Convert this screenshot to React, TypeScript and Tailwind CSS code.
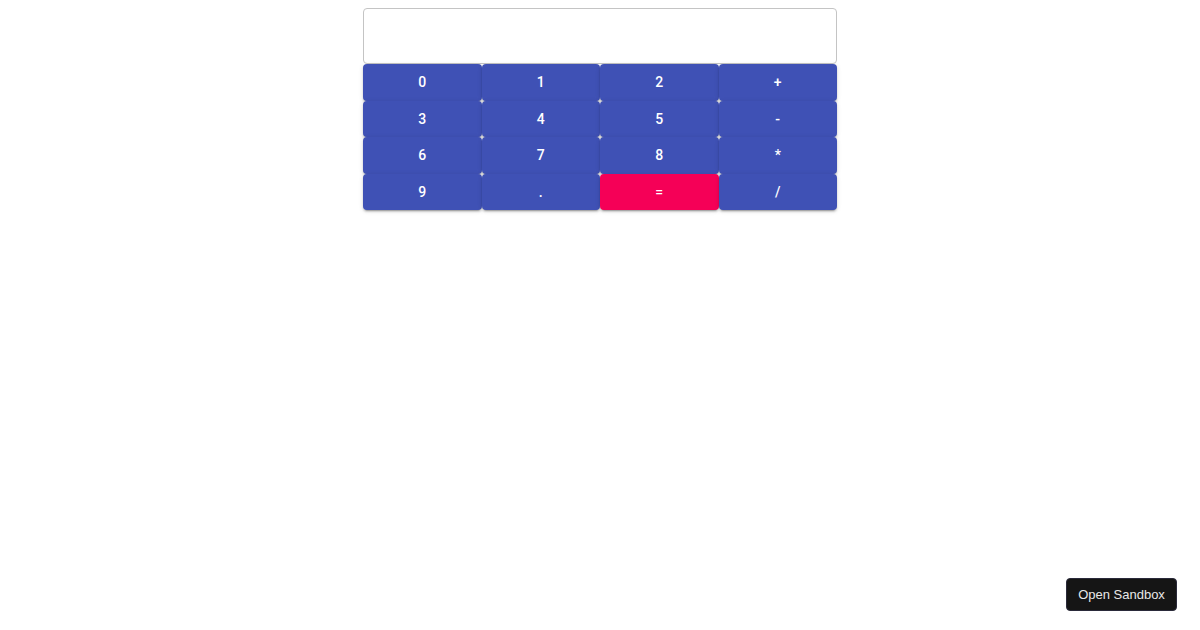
import React from "react";

const keys = ["0", "1", "2", "+", "3", "4", "5", "-", "6", "7", "8", "*", "9", ".", "=", "/"];

export default function App() {
  return (
    <div className="min-h-[630px] w-full bg-white" style={{ fontFamily: "Roboto, 'Liberation Sans', sans-serif" }}>
      <div className="mx-auto w-[474px] pt-2">
        <div className="h-14 w-full rounded border border-[#c4c4c4] bg-white" />
        <div className="grid grid-cols-4">
          {keys.map((k) => (
            <button
              key={k}
              className={`h-[36.5px] rounded text-[14px] font-medium leading-[1.75] text-white shadow-[0px_3px_1px_-2px_rgba(0,0,0,0.2),0px_2px_2px_0px_rgba(0,0,0,0.14),0px_1px_5px_0px_rgba(0,0,0,0.12)] ${
                k === "=" ? "bg-[#f50057]" : "bg-[#3f51b5]"
              }`}
            >
              {k}
            </button>
          ))}
        </div>
      </div>
      <button
        className="fixed bottom-[19px] right-[23px] h-[33px] w-[111px] rounded border border-[#2a2a3a] bg-[#151515] text-[13px] text-[#e8e8e8]"
        style={{ fontFamily: "'Liberation Sans', Arial, sans-serif" }}
      >
        Open Sandbox
      </button>
    </div>
  );
}
